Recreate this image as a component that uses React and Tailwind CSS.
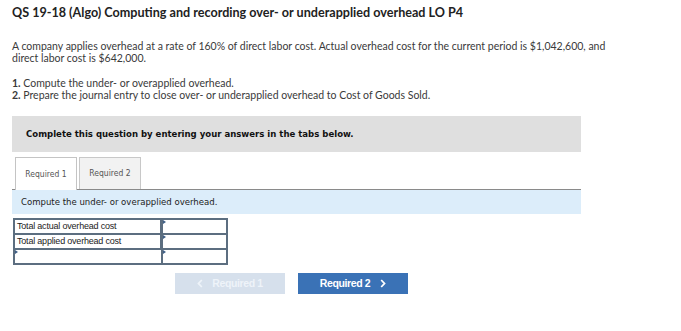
import React from 'react';

const rows = [
  { label: 'Total actual overhead cost' },
  { label: 'Total applied overhead cost' },
  { label: '', input: true },
];

function Marker() {
  return <span className="absolute left-0 top-0 h-[4px] w-[3px] bg-[#3f5f86] [clip-path:polygon(0_0,100%_50%,0_100%)]" />;
}

function Chevron({ left }) {
  return (
    <svg width="6" height="9" viewBox="0 0 6 9" fill="none" stroke="currentColor" strokeWidth="1.8">
      <path d={left ? 'M4.8 1 L1.5 4.5 L4.8 8' : 'M1.2 1 L4.5 4.5 L1.2 8'} />
    </svg>
  );
}

const condensed = { fontFamily: '"DejaVu Sans Condensed", "DejaVu Sans", Verdana, sans-serif', fontStretch: 'condensed' };

export default function App() {
  return (
    <div className="w-[681px] h-[331px] bg-white text-[#333] overflow-hidden" style={{ fontFamily: 'Lato, "Open Sans", sans-serif' }}>
      {/* Question header */}
      <div className="pl-[12px] pt-[5px] text-[12.6px] leading-[16px] font-bold text-[#222]">
        QS 19-18 (Algo) Computing and recording over- or underapplied overhead LO P4
      </div>

      <p className="pl-[12px] mt-[19px] text-[10.5px] leading-[12px] text-[#3a3a3a] whitespace-nowrap">
        A company applies overhead at a rate of 160% of direct labor cost. Actual overhead cost for the current period is $1,042,600, and
        <br />
        direct labor cost is $642,000.
      </p>

      <div className="pl-[12px] mt-[13px] text-[10.5px] leading-[12px] text-[#3a3a3a]">
        <div><b>1.</b> Compute the under- or overapplied overhead.</div>
        <div><b>2.</b> Prepare the journal entry to close over- or underapplied overhead to Cost of Goods Sold.</div>
      </div>

      {/* Instruction box */}
      <div
        className="ml-[12px] mt-[15px] w-[569px] h-[36px] bg-[#dfdfdf] pl-[14px] flex items-center text-[9.5px] font-bold text-[#111]"
        style={condensed}
      >
        Complete this question by entering your answers in the tabs below.
      </div>

      {/* Tabs */}
      <div className="ml-[12px] mt-[5px] w-[569px]" style={condensed}>
        <div className="flex gap-[2px] pl-[3px] h-[32px]">
          <div className="w-[62px] h-[33px] bg-white border border-b-0 border-[#c4c4c4] flex items-center justify-center text-[8.5px] text-[#555] relative z-10">
            Required 1
          </div>
          <div className="w-[62px] h-[32px] bg-[#f2f2f2] border border-b-0 border-[#c8c8c8] flex items-center justify-center text-[8.5px] text-[#555]">
            Required 2
          </div>
        </div>
        <div className="h-[25px] bg-[#dcedfa] border-t border-[#8a8a8a] pl-[9px] flex items-center text-[9.5px] text-[#222]">
          Compute the under- or overapplied overhead.
        </div>
      </div>

      {/* Answer table */}
      <div className="ml-[13px] mt-[4px] w-[215px] border-2 border-[#5c6e80]" style={{ fontFamily: '"Liberation Sans", Arial, sans-serif' }}>
        {rows.map((r, i) => (
          <div key={i} className={`flex ${i > 0 ? 'h-[15px] border-t-2 border-[#5c6e80]' : 'h-[13px]'}`}>
            <div
              className={`relative w-[146px] flex items-center pl-[2px] text-[9px] tracking-[-0.2px] text-[#222] ${r.input ? '' : 'border-r border-[#5c6e80]'}`}
            >
              {r.input && <Marker />}
              {r.label}
            </div>
            <div className="relative flex-1 border-l-2 border-[#5c6e80]">
              <Marker />
            </div>
          </div>
        ))}
      </div>

      {/* Navigation buttons */}
      <div className="flex gap-[13px] ml-[175px] mt-[8px]" style={{ fontFamily: '"Liberation Sans", Arial, sans-serif' }}>
        <button className="w-[110px] h-[21px] bg-[#d6e0ec] text-[#eef3f9] text-[10.5px] font-bold flex items-center justify-center gap-[9px] tracking-[-0.4px]">
          <Chevron left />
          Required 1
        </button>
        <button className="w-[110px] h-[21px] bg-[#3a72b6] text-white text-[10.5px] font-bold flex items-center justify-center gap-[10px] tracking-[-0.4px]">
          Required 2
          <Chevron />
        </button>
      </div>
    </div>
  );
}
